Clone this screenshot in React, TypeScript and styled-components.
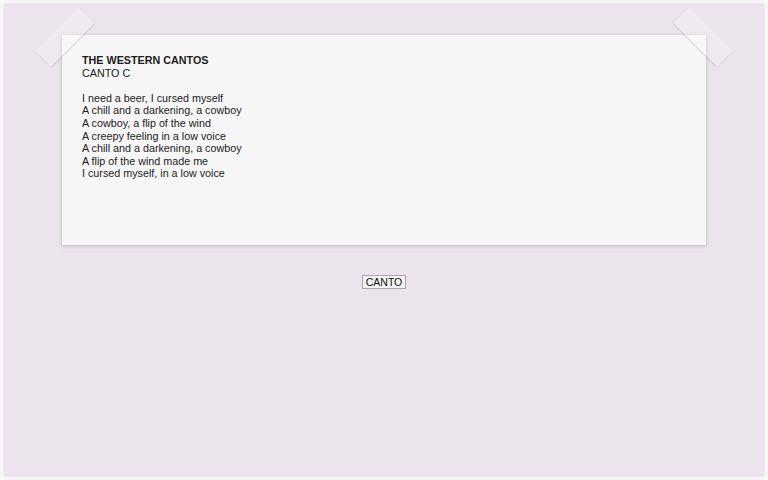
import React from 'react';
import styled, { createGlobalStyle } from 'styled-components';

const GlobalStyle = createGlobalStyle`
    html, body {
        margin: 0;
        padding: 0;
        background: #f7f6f7;
    }
    body {
        font-family: "Liberation Sans", Arial, sans-serif;
    }
`;

const Stage = styled.div`
    box-sizing: border-box;
    margin: 4px;
    height: 472px;
    background: #ebe4ec;
    box-shadow: 0 0 2px rgba(0, 0, 0, 0.12);
    display: flex;
    flex-direction: column;
    align-items: center;
    padding-top: 31px;
`;

const Card = styled.div`
    position: relative;
    box-sizing: border-box;
    width: 644px;
    height: 210px;
    padding: 18px 20px;
    background: #f6f6f6;
    box-shadow: 0 1px 4px rgba(0, 0, 0, 0.22);
    color: #1c1c1c;
    font-size: 10.75px;
    line-height: 12.6px;
`;

const Tape = styled.div<{ $side: 'left' | 'right' }>`
    position: absolute;
    top: -9px;
    ${(p) => (p.$side === 'left' ? 'left: -28px;' : 'right: -28px;')}
    width: 62px;
    height: 22px;
    background: rgba(255, 255, 255, 0.22);
    box-shadow: 0 1px 2px rgba(0, 0, 0, 0.12);
    transform: rotate(${(p) => (p.$side === 'left' ? '-45deg' : '45deg')});
`;

const Title = styled.div`
    font-weight: bold;
    padding-top: 1px;
`;

const Subtitle = styled.div`
    margin-bottom: 12.6px;
`;

const Line = styled.div``;

const CantoButton = styled.button`
    margin-top: 30px;
    padding: 0 3px;
    font-family: "Liberation Sans", Arial, sans-serif;
    font-size: 10.5px;
    line-height: 12px;
    color: #111;
    background: #f3f3f3;
    border: 1px solid #a8a8a8;
    border-radius: 0;
`;

const lines = [
    'I need a beer, I cursed myself',
    'A chill and a darkening, a cowboy',
    'A cowboy, a flip of the wind',
    'A creepy feeling in a low voice',
    'A chill and a darkening, a cowboy',
    'A flip of the wind made me',
    'I cursed myself, in a low voice',
];

export default function App() {
    return (
        <>
            <GlobalStyle />
            <Stage>
                <Card>
                    <Tape $side="left" />
                    <Tape $side="right" />
                    <Title>THE WESTERN CANTOS</Title>
                    <Subtitle>CANTO C</Subtitle>
                    {lines.map((l, i) => (
                        <Line key={i}>{l}</Line>
                    ))}
                </Card>
                <CantoButton>CANTO</CantoButton>
            </Stage>
        </>
    );
}
